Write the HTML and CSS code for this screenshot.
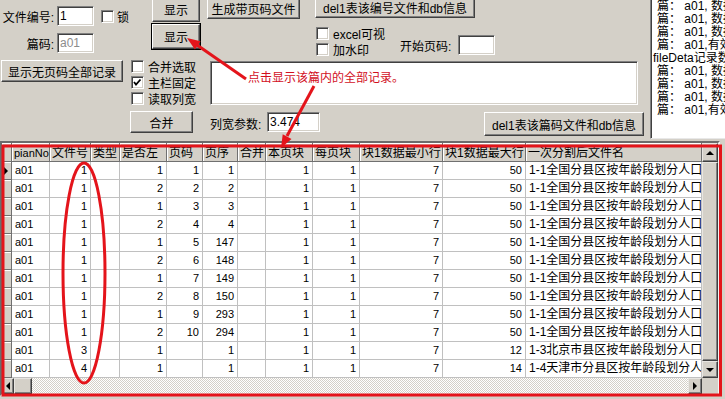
FILE: index.html
```html
<!DOCTYPE html>
<html lang="zh-CN">
<head>
    <meta charset="UTF-8">
    <title>篇码记录</title>
    <link rel="stylesheet" href="styles.css">
</head>
<body>

    <div class="top">
        <div class="col-a">
            <div class="line line-1">
                <span class="lbl">文件编号:</span>
                <input class="edit edit-no" type="text" value="1">
                <span class="box box-lock"></span><span class="box-text">锁</span>
            </div>
            <div class="line line-2">
                <span class="lbl">篇码:</span>
                <input class="edit edit-no" type="text" value="a01" disabled>
            </div>
            <button class="btn btn-all">显示无页码全部记录</button>
        </div>

        <div class="col-b">
            <button class="btn btn-show btn-first">显示</button>
            <button class="btn btn-show btn-default">显示</button>
            <div class="checks">
                <div class="check"><span class="box"></span>合并选取</div>
                <div class="check"><span class="box"><svg width="11" height="11" viewBox="0 0 11 11"><polyline points="2,5 4,7.5 8.5,2.5" fill="none" stroke="#000" stroke-width="1.8"/></svg></span>主栏固定</div>
                <div class="check"><span class="box"></span>读取列宽</div>
            </div>
            <button class="btn btn-merge">合并</button>
        </div>

        <div class="col-c">
            <div class="c-row1">
                <button class="btn btn-gen">生成带页码文件</button>
                <button class="btn btn-del">del1表该编号文件和db信息</button>
            </div>
            <div class="c-row2">
                <div class="checks checks-c">
                    <div class="check"><span class="box"></span>excel可视</div>
                    <div class="check"><span class="box"></span>加水印</div>
                </div>
                <div class="start">
                    <span>开始页码:</span>
                    <input class="edit edit-start" type="text" value="">
                </div>
            </div>
            <div class="memo"></div>
            <div class="c-row4">
                <span class="lbl-width">列宽参数:</span>
                <input class="edit edit-width" type="text" value="3.474">
                <button class="btn btn-del btn-del2">del1表该篇码文件和db信息</button>
            </div>
        </div>

        <div class="col-d">
            <div class="log">
                <div class="ind">篇： a01, 数据</div>
                <div class="ind">篇： a01, 数据</div>
                <div class="ind">篇： a01, 数据</div>
                <div class="ind">篇： a01,有效</div>
                <div>fileDeta记录数</div>
                <div class="ind">篇： a01, 数据</div>
                <div class="ind">篇： a01, 数据</div>
                <div class="ind">篇： a01, 数据</div>
                <div class="ind">篇： a01,有效</div>
            </div>
        </div>
    </div>

    <div class="grid">
        <div class="table" id="table">
            <div class="row head">
                <div class="c ind-cell"></div>
                <div class="c latin">pianNo</div>
                <div class="c">文件号</div>
                <div class="c">类型</div>
                <div class="c">是否左</div>
                <div class="c">页码</div>
                <div class="c">页序</div>
                <div class="c">合并</div>
                <div class="c">本页块</div>
                <div class="c">每页块</div>
                <div class="c">块1数据最小行</div>
                <div class="c">块1数据最大行</div>
                <div class="c">一次分割后文件名</div>
            </div>
        </div>
        <div class="vscroll">
            <div class="sb sb-up"><span class="tri-up"></span></div>
            <div class="sb sb-thumb"></div>
            <div class="sb sb-down"><span class="tri-down"></span></div>
        </div>
        <div class="hscroll">
            <div class="sb sb-left"><span class="tri-left"></span></div>
            <div class="sb sb-hthumb"></div>
            <div class="track"></div>
            <div class="sb sb-right"><span class="tri-right"></span></div>
        </div>
        <div class="corner"></div>
    </div>

    <svg class="marks" width="725" height="399" viewBox="0 0 725 399">
        <rect x="3" y="146" width="717.5" height="249"/>
        <ellipse cx="84" cy="273" rx="21" ry="110"/>
        <line x1="246" y1="79" x2="197" y2="45"/>
        <polygon points="187,38 200.6,41.3 194.9,49.5"/>
        <line x1="314" y1="86" x2="287" y2="136"/>
        <polygon points="281,148 291.5,138.9 282.7,134.2"/>
    </svg>
    <div class="note">点击显示该篇内的全部记录。</div>

    <script>
        var rows = [
            ['a01', 1, '', 1, 1, 1, '', 1, 1, 7, 50, '1-1全国分县区按年龄段划分人口'],
            ['a01', 1, '', 2, 2, 2, '', 1, 1, 7, 50, '1-1全国分县区按年龄段划分人口'],
            ['a01', 1, '', 1, 3, 3, '', 1, 1, 7, 50, '1-1全国分县区按年龄段划分人口'],
            ['a01', 1, '', 2, 4, 4, '', 1, 1, 7, 50, '1-1全国分县区按年龄段划分人口'],
            ['a01', 1, '', 1, 5, 147, '', 1, 1, 7, 50, '1-1全国分县区按年龄段划分人口'],
            ['a01', 1, '', 2, 6, 148, '', 1, 1, 7, 50, '1-1全国分县区按年龄段划分人口'],
            ['a01', 1, '', 1, 7, 149, '', 1, 1, 7, 50, '1-1全国分县区按年龄段划分人口'],
            ['a01', 1, '', 2, 8, 150, '', 1, 1, 7, 50, '1-1全国分县区按年龄段划分人口'],
            ['a01', 1, '', 1, 9, 293, '', 1, 1, 7, 50, '1-1全国分县区按年龄段划分人口'],
            ['a01', 1, '', 2, 10, 294, '', 1, 1, 7, 50, '1-1全国分县区按年龄段划分人口'],
            ['a01', 3, '', 1, '', 1, '', 1, 1, 7, 12, '1-3北京市县区按年龄段划分人口'],
            ['a01', 4, '', 1, '', 1, '', 1, 1, 7, 14, '1-4天津市分县区按年龄段划分人']
        ];

        var table = document.getElementById('table');
        for (var i = 0; i < rows.length; i++) {
            var row = document.createElement('div');
            row.className = 'row';
            var html = '<div class="c ind-cell">' + (i === 0 ? '<span class="tri-cur"></span>' : '') + '</div>';
            for (var j = 0; j < rows[i].length; j++) {
                var cls = 'c num';
                if (j === 0) cls = 'c';
                if (j === 11) cls = 'c fname';
                html += '<div class="' + cls + '">' + rows[i][j] + '</div>';
            }
            row.innerHTML = html;
            table.appendChild(row);
        }
    </script>

</body>
</html>
```

FILE: styles.css
```css
* {
    box-sizing: border-box;
}
body {
    margin: 0;
    width: 725px;
    height: 399px;
    overflow: hidden;
    position: relative;
    background-color: #d4d0c8;
    font-family: "Liberation Sans", "Noto Sans CJK SC", sans-serif;
    font-size: 12px;
    color: #000;
}

/* ---- form controls ---- */
.btn {
    display: block;
    margin: 0;
    padding: 0;
    font: inherit;
    color: #000;
    background-color: #d4d0c8;
    border: 1px solid;
    border-color: #fff #404040 #404040 #fff;
    box-shadow: inset -1px -1px #808080;
    white-space: nowrap;
}
.edit {
    margin: 0;
    padding: 0 2px;
    height: 20px;
    font: inherit;
    color: #000;
    background-color: #fff;
    border: 1px solid;
    border-color: #808080 #fff #fff #808080;
    box-shadow: inset 1px 1px #404040, inset -1px -1px #d4d0c8;
    outline: none;
}
.edit:disabled {
    color: #8c8c8c;
    background-color: #fff;
}
.box {
    flex: none;
    display: flex;
    align-items: center;
    justify-content: center;
    width: 13px;
    height: 13px;
    background-color: #fff;
    border: 1px solid;
    border-color: #808080 #fff #fff #808080;
    box-shadow: inset 1px 1px #404040, inset -1px -1px #d4d0c8;
}
.check {
    display: flex;
    align-items: center;
    gap: 4px;
    height: 16px;
}

/* ---- top panel ---- */
.top {
    display: flex;
    height: 141px;
}
.col-a,
.col-b,
.col-c {
    flex: none;
}
.col-a {
    width: 130px;
}
.line {
    display: flex;
    align-items: center;
    height: 20px;
}
.line-1 {
    margin-top: 6px;
}
.line-2 {
    margin-top: 7px;
}
.lbl {
    width: 57px;
    padding-right: 3px;
    text-align: right;
    white-space: nowrap;
}
.edit-no {
    width: 37px;
}
.box-lock {
    margin-left: 7px;
}
.box-text {
    margin-left: 3px;
}
.btn-all {
    margin: 7px 0 0 1px;
    width: 122px;
    height: 22px;
}

.col-b {
    width: 77px;
}
.btn-show {
    margin-left: 22px;
    width: 48px;
    height: 25px;
}
.btn-first {
    margin-top: -3px;
}
.btn-default {
    margin-top: 2px;
    outline: 1px solid #000;
}
.col-b .checks {
    margin: 9px 0 0 1px;
}
.btn-merge {
    margin-top: 5px;
    width: 63px;
    height: 22px;
}

.col-c {
    width: 440px;
}
.c-row1 {
    display: flex;
    margin-top: -3px;
    height: 22px;
}
.btn-gen {
    width: 93px;
    height: 22px;
}
.btn-del {
    margin-left: 15px;
    width: 160px;
    height: 21px;
}
.c-row2 {
    display: flex;
    height: 42px;
}
.checks-c {
    width: 193px;
    padding: 6px 0 0 109px;
}
.start {
    display: flex;
    align-items: center;
    gap: 7px;
    margin-top: 16px;
    height: 20px;
}
.edit-start {
    width: 37px;
}
.memo {
    margin-left: 3px;
    width: 428px;
    height: 44px;
    background-color: #fff;
    border: 1px solid;
    border-color: #808080 #fff #fff #808080;
    box-shadow: inset 1px 1px #404040, inset -1px -1px #d4d0c8;
}
.c-row4 {
    display: flex;
    align-items: flex-start;
    margin-top: 7px;
}
.lbl-width {
    margin: 3px 0 0 3px;
    width: 57px;
}
.edit-width {
    width: 53px;
}
.btn-del2 {
    margin-left: 164px;
    height: 24px;
}

.col-d {
    flex: 1;
    min-width: 0;
    padding-left: 3px;
}
.log {
    height: 139px;
    overflow: hidden;
    line-height: 13px;
    white-space: nowrap;
    background-color: #fff;
    border-left: 1px solid #808080;
    border-bottom: 1px solid #e8e8e8;
    box-shadow: inset 1px 0 #404040;
    padding-left: 2px;
}
.log .ind {
    padding-left: 4px;
}

/* ---- data grid ---- */
.grid {
    display: grid;
    grid-template-columns: 700px 16px;
    grid-template-rows: 235px 16px;
    width: 720px;
    height: 255px;
    border: 2px solid;
    border-color: #6c6c6c #f4f4f4 #f4f4f4 #6c6c6c;
}
.table {
    overflow: hidden;
    background-color: #d4d0c8;
}
.row {
    display: grid;
    grid-template-columns: 10px 38px 41px 29px 47px 36px 35px 28px 47px 47px 83px 83px 176px;
    height: 18px;
}
.c {
    padding: 0 3px;
    line-height: 17px;
    font-size: 11px;
    white-space: nowrap;
    overflow: hidden;
    background-color: #fff;
    border-right: 1px solid #c0c0c0;
    border-bottom: 1px solid #c0c0c0;
}
.num {
    text-align: right;
}
.fname {
    font-size: 12px;
    padding-right: 0;
}
.row.head {
    height: 19px;
}
.head .c {
    padding: 2px 0 0 2px;
    line-height: 16px;
    font-size: 12px;
    background-color: #d4d0c8;
    border-color: #707070;
    box-shadow: inset 1px 1px #fff;
}
.head .c.latin {
    font-size: 11px;
}
.c.ind-cell {
    display: flex;
    align-items: center;
    padding: 0 0 0 2px;
    background-color: #d4d0c8;
    border-color: #707070;
    box-shadow: inset 1px 1px #fff;
}
.tri-cur {
    border-left: 4px solid #000;
    border-top: 4px solid transparent;
    border-bottom: 4px solid transparent;
}

/* ---- scroll bars ---- */
.sb {
    display: flex;
    align-items: center;
    justify-content: center;
    background-color: #d4d0c8;
    border: 1px solid;
    border-color: #e8e6e2 #404040 #404040 #e8e6e2;
    box-shadow: inset -1px -1px #808080;
}
.vscroll {
    display: flex;
    flex-direction: column;
}
.sb-up {
    height: 19px;
}
.sb-thumb {
    flex: 1;
}
.sb-down {
    height: 17px;
}
.hscroll {
    display: flex;
}
.sb-left {
    width: 12px;
}
.sb-hthumb {
    width: 18px;
}
.track {
    flex: 1;
    background: repeating-conic-gradient(#fff 0 25%, #d4d0c8 0 50%) 0 0 / 2px 2px;
}
.sb-right {
    width: 14px;
}
.corner {
    background-color: #d4d0c8;
}
.tri-up {
    border-bottom: 4px solid #000;
    border-left: 4px solid transparent;
    border-right: 4px solid transparent;
}
.tri-down {
    border-top: 4px solid #000;
    border-left: 4px solid transparent;
    border-right: 4px solid transparent;
}
.tri-left {
    border-right: 4px solid #000;
    border-top: 4px solid transparent;
    border-bottom: 4px solid transparent;
}
.tri-right {
    border-left: 4px solid #000;
    border-top: 4px solid transparent;
    border-bottom: 4px solid transparent;
}

/* ---- red annotations ---- */
.marks {
    position: absolute;
    left: 0;
    top: 0;
    pointer-events: none;
}
.marks rect,
.marks ellipse,
.marks line {
    fill: none;
    stroke: #e4141b;
    stroke-width: 3;
}
.marks polygon {
    fill: #e4141b;
}
.note {
    position: absolute;
    left: 248px;
    top: 70px;
    line-height: 16px;
    color: #d2101e;
    white-space: nowrap;
}
```
